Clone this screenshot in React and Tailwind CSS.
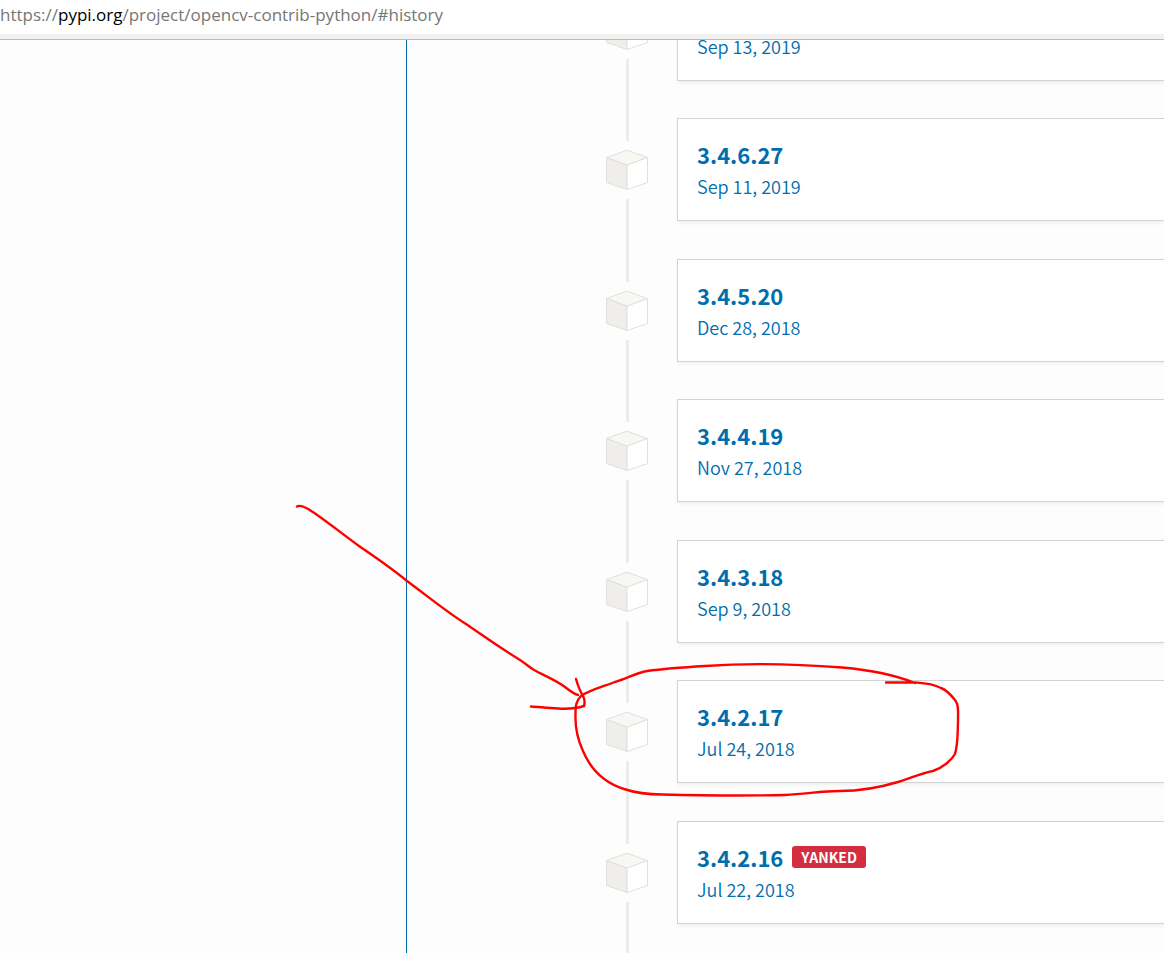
const releases = [
  // its version line is scrolled out of view
  { version: "", date: "Sep 13, 2019" },
  { version: "3.4.6.27", date: "Sep 11, 2019" },
  { version: "3.4.5.20", date: "Dec 28, 2018" },
  { version: "3.4.4.19", date: "Nov 27, 2018" },
  { version: "3.4.3.18", date: "Sep 9, 2018" },
  { version: "3.4.2.17", date: "Jul 24, 2018" },
  { version: "3.4.2.16", date: "Jul 22, 2018", yanked: true },
];

function Cube() {
  return (
    <svg width="44" height="42" viewBox="0 0 44 42" className="block shrink-0" aria-hidden="true">
      <g stroke="#e0e0dd" strokeWidth="1" strokeLinejoin="round">
        <path d="M1.5 8.5 22 1.2 42.5 8.5 22 16.2Z" fill="#f7f8f4" />
        <path d="M1.5 8.5 22 16.2V40.5L1.5 33.5Z" fill="#efeeea" />
        <path d="M42.5 8.5 22 16.2V40.5L42.5 33.5Z" fill="#ffffff" />
      </g>
    </svg>
  );
}

function Release({ release }) {
  return (
    <li className="group flex">
      <div className="w-11 shrink-0 flex flex-col items-center">
        <span className="w-[3px] h-[23px] bg-[#ececec]" />
        <span className="py-2">
          <Cube />
        </span>
        <span className="w-[3px] flex-1 bg-[#ececec]" />
      </div>

      <a
        href={`#${release.version}`}
        className="flex-1 ml-7 mb-[37px] group-even:mb-[38px] border border-r-0 border-[#d3d3d3] bg-white pl-[19px] pr-5 pt-[19px] pb-[18px] shadow-[1px_2px_4px_rgba(0,0,0,0.06)] text-[#006dad] no-underline"
      >
        <p className="min-h-8 flex items-center gap-[9px] text-[22px] leading-8 font-semibold">
          {release.version}
          {release.yanked ? (
            <span className="rounded-[3px] bg-[#d32d41] px-[9px] text-[14px] leading-[22px] font-bold text-white">
              YANKED
            </span>
          ) : null}
        </p>
        <p className="text-[18px] leading-8 font-[350]">
          <time>{release.date}</time>
        </p>
      </a>
    </li>
  );
}

// red pen marks drawn over the page
function Annotation() {
  return (
    <svg
      width="700"
      height="320"
      viewBox="280 490 700 320"
      className="absolute left-[280px] top-[450px] pointer-events-none"
      fill="none"
      stroke="#ff0000"
      strokeWidth="2.4"
      strokeLinecap="round"
      strokeLinejoin="round"
      aria-hidden="true"
    >
      <path d="M297 506.5C300 504.5 304 506.5 309 509.5C324 519 341 533 359 546C375 557 390 567 407 581C430 598 447 612 466 624C485 637 502 649 520 660C525 663 529 667 534 670C545 676 556 680 565 687C570 691 574 694 578 695" />
      <path d="M576 679C578 686 580 691 583 696C585 700 585 703 584 706C575 709 567 709 558 708.5C548 708 539 707 531 706.5" />
      <path d="M915 683C895 675 870 670 842 667.5C790 663.5 740 663.5 705 666C680 667.5 662 669 647 671C636 673 626 679 615 682C602 687 590 690 581 696C576 701 575.5 706 575.5 714C575 727 577 738 583 751C591 770 605 783 624 789C639 794 650 794.5 662 794.5C700 795.5 745 796 785 795C807 794 821 791 840 791C860 791 878 788 898 782C911 778 922 773 933 771C942 768 951 761 955 754C958 744 957.5 735 958 722C958 712 959 705 955 700C951 695 947 690 941 688C931 683 922 683 915 682.5L886 682.5" />
    </svg>
  );
}

export default function App() {
  return (
    <div className="h-screen flex flex-col overflow-hidden bg-[#fdfdfd] font-['Noto_Sans_CJK_SC','Noto_Sans',sans-serif]">
      <header className="shrink-0 border-b border-[#bdbdbd] bg-[#f1f1f1] pb-[5px]">
        <div className="h-[34px] bg-white overflow-hidden">
          <a
            href="https://pypi.org/project/opencv-contrib-python/#history"
            className="block whitespace-nowrap font-['Open_Sans',sans-serif] text-[17px] leading-[30px] text-[#767676] no-underline"
          >
            https://<span className="text-black">pypi.org</span>/project/opencv-contrib-python/#history
          </a>
        </div>
      </header>

      <main className="relative flex-1 min-h-0 flex overflow-hidden">
        <aside className="w-[407px] shrink-0 border-r border-[#006dad]" />
        <section className="flex-1 min-w-0 pl-[198px]">
          {/* scrolled part way down the history */}
          <ol className="-mt-[62px]">
            {releases.map((release) => (
              <Release key={release.date} release={release} />
            ))}
          </ol>
        </section>
        <Annotation />
      </main>
    </div>
  );
}
